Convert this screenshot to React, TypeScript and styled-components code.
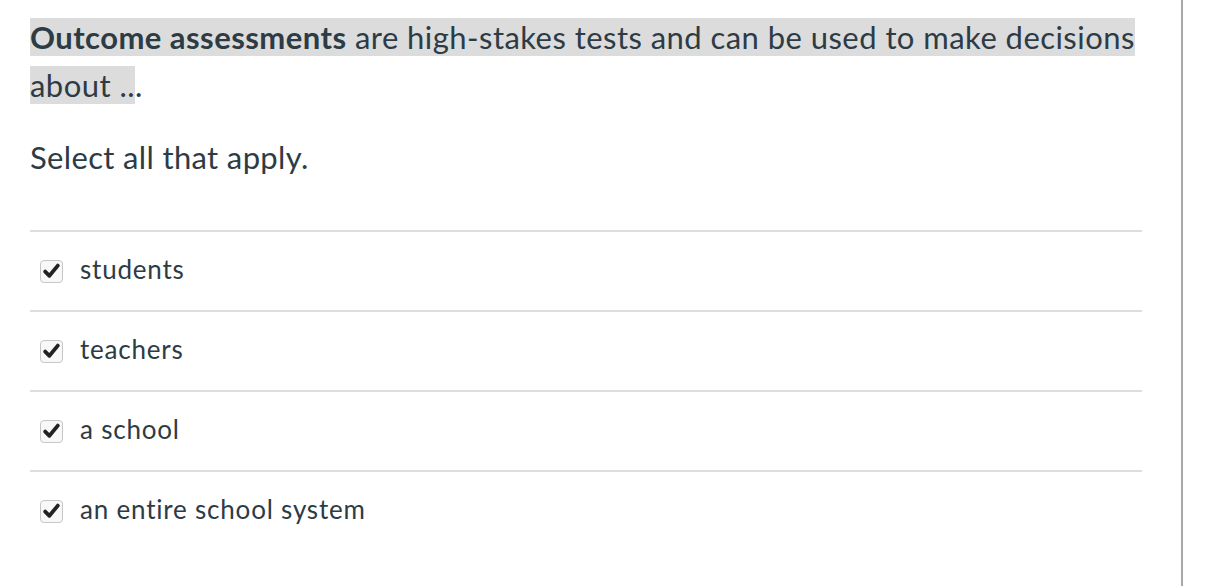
import styled, { createGlobalStyle } from "styled-components";

const GlobalStyle = createGlobalStyle`
  html, body {
    margin: 0;
    padding: 0;
    background: #ffffff;
  }
  body {
    font-family: Lato, "Noto Sans", "Liberation Sans", sans-serif;
    color: #2d3b45;
  }
`;

const answers = ["students", "teachers", "a school", "an entire school system"];

const App = () => {
  return (
    <>
      <GlobalStyle />
      <Page>
        <Question>
          <Prompt>
            <Highlight>
              <strong>Outcome assessments</strong> are high-stakes tests and can be
              used to make decisions about ..
            </Highlight>
            .
          </Prompt>
          <Hint>Select all that apply.</Hint>
          <AnswerList>
            {answers.map((answer) => (
              <Answer key={answer}>
                <Box>
                  <svg width="17" height="16" viewBox="0 0 17 16">
                    <path
                      d="M2.2 8.6 L6.4 12.8 L14.8 2.6"
                      fill="none"
                      stroke="#222222"
                      strokeWidth="3.8"
                      strokeLinecap="round"
                      strokeLinejoin="round"
                    />
                  </svg>
                </Box>
                <Label>{answer}</Label>
              </Answer>
            ))}
          </AnswerList>
        </Question>
      </Page>
    </>
  );
};

export default App;

const Page = styled.div`
  width: 1183px;
  min-height: 586px;
  border-right: 2px solid #a8a8a8;
  box-sizing: border-box;
`;

const Question = styled.section`
  width: 1112px;
  padding: 13px 0 0 30px;
`;

const Prompt = styled.p`
  margin: 0;
  font-size: 31px;
  letter-spacing: 0.45px;
  line-height: 48px;
`;

const Highlight = styled.span`
  background: #dcdcdc;
  strong {
    font-weight: 700;
  }
`;

const Hint = styled.p`
  margin: 24px 0 0 0;
  font-size: 31px;
  letter-spacing: 0.35px;
  line-height: 48px;
`;

const AnswerList = styled.ul`
  list-style: none;
  margin: 49px 0 0 0;
  padding: 0;
`;

const Answer = styled.li`
  display: flex;
  align-items: center;
  gap: 17px;
  height: 80px;
  box-sizing: border-box;
  border-top: 2px solid #dddddd;
  padding-left: 10px;
`;

const Box = styled.span`
  display: flex;
  align-items: center;
  justify-content: center;
  width: 23px;
  height: 23px;
  box-sizing: border-box;
  border: 1px solid #c6c6c6;
  border-radius: 4px;
  background: #f8f8f8;
`;

const Label = styled.span`
  font-size: 26px;
  letter-spacing: 0.8px;
  line-height: 32px;
  padding-bottom: 4px;
`;
